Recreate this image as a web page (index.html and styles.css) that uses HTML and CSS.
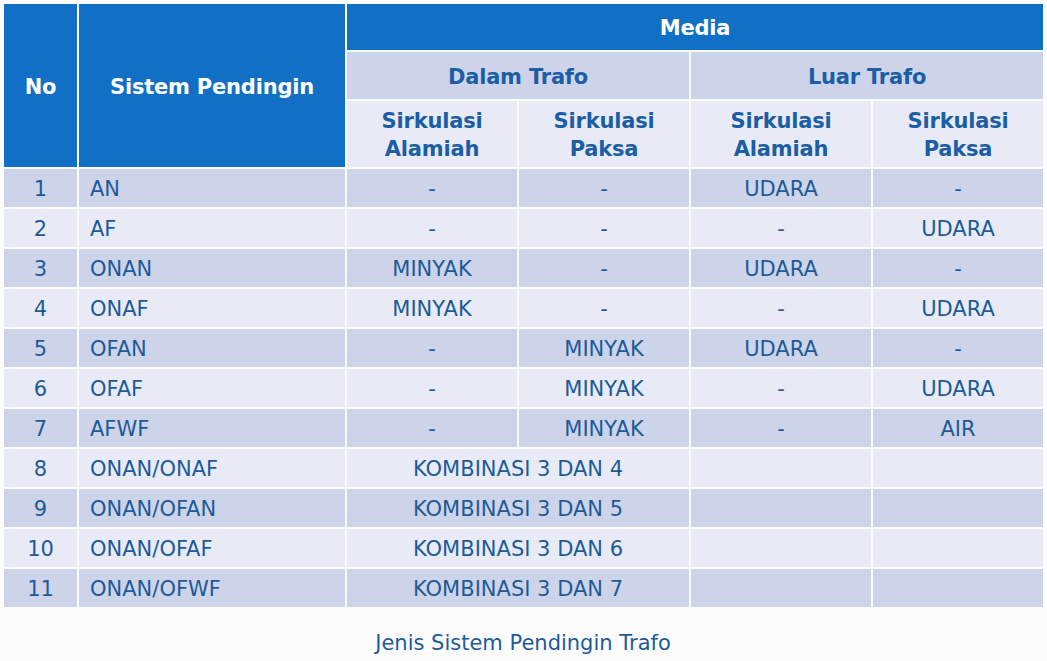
FILE: index.html
```html
<!DOCTYPE html>
<html>
<head>
<meta charset="utf-8">
<link rel="stylesheet" href="styles.css">
</head>
<body>
<div class="page">
<table class="cool">
  <colgroup>
    <col class="c-no"><col class="c-sys"><col class="c-a"><col class="c-b"><col class="c-c"><col class="c-d">
  </colgroup>
  <thead>
    <tr class="h1">
      <th rowspan="3" class="dark">No</th>
      <th rowspan="3" class="dark">Sistem Pendingin</th>
      <th colspan="4" class="dark">Media</th>
    </tr>
    <tr class="h2">
      <th colspan="2" class="lt">Dalam Trafo</th>
      <th colspan="2" class="lt">Luar Trafo</th>
    </tr>
    <tr class="h3">
      <th class="lt2">Sirkulasi<br>Alamiah</th>
      <th class="lt2">Sirkulasi<br>Paksa</th>
      <th class="lt2">Sirkulasi<br>Alamiah</th>
      <th class="lt2">Sirkulasi<br>Paksa</th>
    </tr>
  </thead>
  <tbody>
    <tr><td>1</td><td class="name">AN</td><td>-</td><td>-</td><td>UDARA</td><td>-</td></tr>
    <tr><td>2</td><td class="name">AF</td><td>-</td><td>-</td><td>-</td><td>UDARA</td></tr>
    <tr><td>3</td><td class="name">ONAN</td><td>MINYAK</td><td>-</td><td>UDARA</td><td>-</td></tr>
    <tr><td>4</td><td class="name">ONAF</td><td>MINYAK</td><td>-</td><td>-</td><td>UDARA</td></tr>
    <tr><td>5</td><td class="name">OFAN</td><td>-</td><td>MINYAK</td><td>UDARA</td><td>-</td></tr>
    <tr><td>6</td><td class="name">OFAF</td><td>-</td><td>MINYAK</td><td>-</td><td>UDARA</td></tr>
    <tr><td>7</td><td class="name">AFWF</td><td>-</td><td>MINYAK</td><td>-</td><td>AIR</td></tr>
    <tr><td>8</td><td class="name">ONAN/ONAF</td><td colspan="2">KOMBINASI 3 DAN 4</td><td></td><td></td></tr>
    <tr><td>9</td><td class="name">ONAN/OFAN</td><td colspan="2">KOMBINASI 3 DAN 5</td><td></td><td></td></tr>
    <tr><td>10</td><td class="name">ONAN/OFAF</td><td colspan="2">KOMBINASI 3 DAN 6</td><td></td><td></td></tr>
    <tr><td>11</td><td class="name">ONAN/OFWF</td><td colspan="2">KOMBINASI 3 DAN 7</td><td></td><td></td></tr>
  </tbody>
</table>
<p class="caption">Jenis Sistem Pendingin Trafo</p>
</div>
</body>
</html>
```
FILE: styles.css
```css
html, body {
  margin: 0;
  padding: 0;
  background: #fcfcfd;
}
.page {
  padding: 2px 0 0 2px;
  width: 1045px;
}
.cool {
  border-collapse: separate;
  border-spacing: 2px;
  table-layout: fixed;
  width: 1042px;
  font-family: "DejaVu Sans", Verdana, sans-serif;
}
.c-no { width: 73px; }
.c-sys { width: 266px; }
.c-a { width: 170px; }
.c-b { width: 170px; }
.c-c { width: 180px; }
.c-d { width: 170px; }

.cool th, .cool td {
  padding: 0;
  text-align: center;
  vertical-align: middle;
}
.cool th {
  font-weight: bold;
  font-size: 21px;
  padding-top: 2px;
  letter-spacing: -0.2px;
}
.h1 { height: 46px; }
.h2 { height: 47px; }
.h3 { height: 66px; }
.dark {
  background: #1170c6;
  color: #ffffff;
}
.lt {
  background: #cdd4e9;
  color: #1b5ea6;
}
.lt2 {
  background: #e8ebf5;
  color: #1b5ea6;
  line-height: 28px;
}
.cool tbody tr {
  height: 38px;
}
.cool td {
  font-size: 21px;
  color: #1d5b98;
  line-height: 24px;
  padding-top: 1px;
}
.cool tbody tr:nth-child(odd) td { background: #cdd4e9; }
.cool tbody tr:nth-child(even) td { background: #e8ebf5; }
.cool td.name {
  text-align: left;
  padding-left: 11px;
}
.caption {
  margin: 22px 0 0 0;
  width: 1042px;
  text-align: center;
  font-family: "DejaVu Sans", Verdana, sans-serif;
  font-size: 21px;
  color: #1d5b98;
}
```
